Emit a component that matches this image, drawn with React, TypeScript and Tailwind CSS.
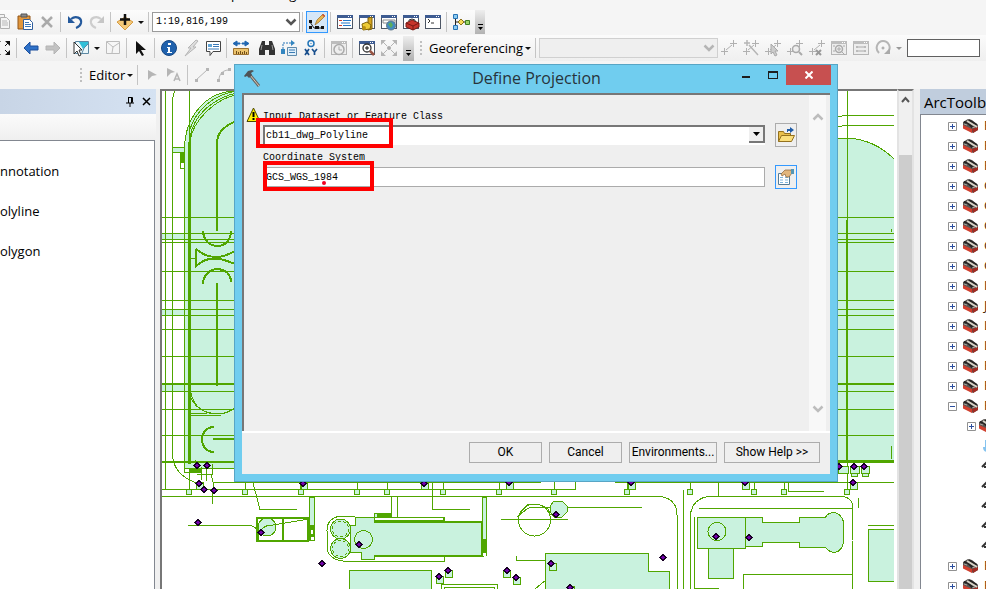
import React from 'react';

type IconProps = { children: React.ReactNode; size?: number };

const Icon: React.FC<IconProps> = ({ children, size = 18 }) => (
  <svg width={size} height={size} viewBox="0 0 18 18" fill="none" aria-hidden="true" className="shrink-0">
    {children}
  </svg>
);

type ToolProps = { label: string; active?: boolean; children: React.ReactNode };

const Tool: React.FC<ToolProps> = ({ label, active, children }) => (
  <button
    aria-label={label}
    className={
      active
        ? 'flex h-[22px] w-[22px] shrink-0 items-center justify-center border border-[#3399ff] bg-[#d5e7f8]'
        : 'flex h-[22px] w-[22px] shrink-0 items-center justify-center'
    }
  >
    <Icon>{children}</Icon>
  </button>
);

const Sep = () => <span className="mr-[3px] ml-[2px] h-5 w-px shrink-0 bg-[#c4c4c4]" />;

const Caret = ({ color = '#111' }: { color?: string }) => (
  <svg width="10" height="8" viewBox="0 0 10 8" className="shrink-0" aria-hidden="true">
    <path d="M2 3h6L5 6z" fill={color} />
  </svg>
);

const Grip = () => (
  <svg width="4" height="16" viewBox="0 0 4 16" className="shrink-0" aria-hidden="true">
    <path d="M1 1h2v2H1zM1 5h2v2H1zM1 9h2v2H1zM1 13h2v2H1z" fill="#c0c0c0" />
  </svg>
);

const Overflow = () => (
  <button
    aria-label="Toolbar options"
    className="ml-[3px] flex h-[25px] w-[11px] shrink-0 items-end justify-center bg-linear-to-b from-[#eeeeee] to-[#b0b0b0] pb-1"
  >
    <svg width="7" height="8" viewBox="0 0 7 8" aria-hidden="true">
      <path d="M1 1h5v1H1zM1 4h5L3.5 7z" fill="#000" />
    </svg>
  </button>
);

const WindowFrame = ({ dim }: { dim?: boolean }) => (
  <>
    <rect x="1.5" y="2.5" width="15" height="13" fill={dim ? '#ededed' : '#fff'} stroke={dim ? '#b5b5b5' : '#4d5664'} />
    <path d="M1 2h16v3H1z" fill={dim ? '#bdbdbd' : '#3e5c92'} />
    <path d="M12 3h1v1h-1zM14 3h1v1h-1z" fill="#fff" />
  </>
);

const LinkPoints = () => (
  <path d="M4.500 9v7M1 12.500h7M13.500 1v7M10 4.500h7M6 11l6-5" stroke="#b0b0b0" strokeWidth="1" />
);

const Chevron = ({ up, color = '#777' }: { up?: boolean; color?: string }) => (
  <svg width="12" height="10" viewBox="0 0 12 10" fill="none" className="shrink-0" aria-hidden="true">
    <path d={up ? 'M1.500 7.500L6 3l4.500 4.500' : 'M1.500 2.500L6 7l4.500-4.500'} stroke={color} strokeWidth="2.500" />
  </svg>
);

const StandardBar = () => (
  <div className="flex h-6 w-[485px] items-center overflow-hidden bg-linear-to-b from-[#fcfcfc] to-[#f0f0f0]">
    <span className="-ml-2" />
    <Tool label="Copy">
      <path d="M2.500 1.500h8v11h-8z" fill="#f4f4f4" stroke="#b0b0b0" />
      <path d="M6.500 4.500h6l3 3v8h-9z" fill="#f4f4f4" stroke="#b0b0b0" />
      <path d="M8 8h5M8 10h6M8 12h6" stroke="#b8b8b8" />
    </Tool>
    <Tool label="Paste">
      <path d="M2 3h12v13H2z" fill="#e0963c" stroke="#915417" />
      <path d="M5 1h6v3H5z" fill="#8b8b8b" stroke="#555" />
      <path d="M7.500 6.500h6l3 3v7h-9z" fill="#fff" stroke="#315f9d" />
      <path d="M9 9.500h4M9 11.500h6M9 13.500h6" stroke="#3c78bb" />
    </Tool>
    <Tool label="Delete">
      <path d="M4 4l10 10M14 4L4 14" stroke="#aaa" strokeWidth="2.500" />
    </Tool>
    <Sep />
    <Tool label="Undo">
      <path d="M5 6c5-4 11-1 10 4-.5 2-2 4-5 5" stroke="#24599c" strokeWidth="2.200" />
      <path d="M2 3v7h7z" fill="#24599c" />
    </Tool>
    <Tool label="Redo">
      <path d="M13 6C8 2 2 5 3 10c.5 2 2 4 5 5" stroke="#cdcdcd" strokeWidth="2.200" />
      <path d="M16 3v7H9z" fill="#c6c6c6" />
    </Tool>
    <Sep />
    <Tool label="Add Data">
      <path d="M1 9l8-5 8 5-8 8z" fill="#f3c878" stroke="#d69a40" />
      <path d="M9 1v11M4 6.500h10" stroke="#111" strokeWidth="2.500" />
    </Tool>
    <Caret />
    <Sep />
    <label className="relative flex h-5 w-[148px] shrink-0 items-center border border-[#9b9b9b] bg-white">
      <select
        aria-label="Map scale"
        className="h-full w-full appearance-none px-[3px] font-['Liberation_Mono',monospace] text-[10px] leading-[18px] text-black"
      >
        <option>1:19,816,199</option>
      </select>
      <span className="pointer-events-none absolute right-[2px]">
        <Chevron color="#555" />
      </span>
    </label>
    <Sep />
    <Tool label="Editor Toolbar" active>
      <path d="M2 9l4 6M6 15h8" stroke="#222" />
      <path d="M1 7h3v3H1zM1 13h3v3H1zM7 13h4v3H7zM13 13h3v3h-3z" fill="#111" />
      <path d="M7 12l2-5 6-6 2 2-6 6z" fill="#e8b64c" stroke="#9a6a25" strokeWidth=".7" />
      <path d="M14 2l1-1 2 2-1 1z" fill="#d34b3a" />
    </Tool>
    <Sep />
    <Tool label="Table Of Contents">
      <WindowFrame />
      <path d="M3 7.500h3M3 12.500h3" stroke="#d23a2a" />
      <path d="M7 7.500h8M5 10h9M7 12.500h8" stroke="#2678c8" strokeWidth="1.200" />
    </Tool>
    <Tool label="Catalog">
      <WindowFrame />
      <path d="M10 5l4-1v12l-4 1z" fill="#d7a51e" stroke="#7d5e08" />
      <path d="M4 11l5-2 4 3-1 4-7 1z" fill="#edcb37" stroke="#80650b" />
      <circle cx="6" cy="15" r="2" fill="#b98f12" />
    </Tool>
    <Tool label="Search">
      <WindowFrame />
      <path d="M3 7h12v3H3z" fill="#fff" stroke="#8a8a8a" />
      <circle cx="11" cy="12.500" r="4.500" fill="#428cc3" stroke="#617889" />
      <path d="M8 11l3-2 2 3-2 3z" fill="#5cad5c" />
    </Tool>
    <Tool label="ArcToolbox">
      <WindowFrame />
      <path d="M4 10l6-3 7 3v4l-6 3-7-3z" fill="#c7352c" stroke="#7a1a15" />
      <path d="M4 10l7 3 6-3M11 13v4" stroke="#7a1a15" />
      <path d="M7 8.500V7l3-1 3 1v1.500" stroke="#333" />
    </Tool>
    <Tool label="Python">
      <WindowFrame />
      <path d="M4 6l2 2-2 2M7 10h3" stroke="#333" />
    </Tool>
    <Sep />
    <Tool label="ModelBuilder">
      <path d="M3.500 5v9M4 9h10" stroke="#222" />
      <path d="M1.500 1.500h4v4h-4zM1.500 12.500h4v4h-4z" fill="#8ccbf1" stroke="#2874b6" />
      <path d="M9 6l3 3-3 3-3-3z" fill="#f8db58" stroke="#8d721b" />
      <path d="M13.500 7.500h4v4h-4z" fill="#9bd567" stroke="#3f7c22" />
    </Tool>
    <Overflow />
  </div>
);

const ToolsBar = () => (
  <div className="mt-px flex h-[26px] w-full items-center overflow-hidden bg-linear-to-b from-[#fbfbfb] to-[#efefef] pr-[6px]">
    <span className="-ml-2" />
    <Tool label="Full Extent">
      <path d="M11 2h5v5zM11 16h5v-5zM3 2h4L3 6zM3 16h4l-4-4z" fill="#111" />
      <path d="M11 7l4-4M11 11l4 4" stroke="#111" />
    </Tool>
    <Sep />
    <Tool label="Back">
      <path d="M2 9l6-6v4h8v4H8v4z" fill="#2f72c9" stroke="#1c4f9c" />
    </Tool>
    <Tool label="Forward">
      <path d="M16 9l-6-6v4H2v4h8v4z" fill="#c2c2c2" stroke="#b4b4b4" />
    </Tool>
    <Sep />
    <Tool label="Select Features">
      <path d="M3.500 2.500h13v12h-13z" fill="#eaf7fb" stroke="#5c88a3" />
      <path d="M7 3h9v2l-5 5z" fill="#31bfd8" />
      <path d="M10 14l2-5 4-4" stroke="#5c88a3" />
      <path d="M2 3l8 8H7l2 5-2 1-2-5-3 3z" fill="#fff" stroke="#333" />
    </Tool>
    <Caret />
    <Tool label="Clear Selection">
      <path d="M2.500 2.500h13v12h-13zM3 3l6 5 6-4M9 8l-1 6" stroke="#bcbcbc" fill="#f5f5f5" />
    </Tool>
    <Sep />
    <Tool label="Select Elements">
      <path d="M4 2l10 9H9l3 5-2 1-3-5-3 3z" fill="#111" />
    </Tool>
    <Sep />
    <Tool label="Identify">
      <circle cx="9" cy="9" r="7.500" fill="#1f61ad" stroke="#164783" />
      <path d="M8 4h3v2H8zM7 8h3v5h2v1H7v-1h1V9H7z" fill="#fff" />
    </Tool>
    <Tool label="Hyperlink">
      <path d="M14 1L6 9h3l-6 8 11-9h-3l5-6z" fill="#dedede" stroke="#b5b5b5" />
    </Tool>
    <Tool label="HTML Popup">
      <path d="M2.500 2.500h14v10H9l-3 4v-4H2.500z" fill="#fff" stroke="#444" />
      <path d="M4 5h4v3H4z" fill="#63a5d7" />
      <path d="M9 5.500h6M9 7.500h6M4 10h11" stroke="#3978b8" />
    </Tool>
    <Sep />
    <Tool label="Measure">
      <path d="M1 4.500L5 2v2h3v1H5v2zM17 4.500L13 2v2h-3v1h3v2z" fill="#2166b1" stroke="#2166b1" />
      <path d="M1.500 9.500h15v6h-15z" fill="#ecc36c" stroke="#9b7131" />
      <path d="M4.500 12v3M6.500 13v2M8.500 12v3M10.500 13v2M12.500 12v3M14.500 13v2" stroke="#704d18" />
    </Tool>
    <span className="w-1 shrink-0" />
    <Tool label="Find">
      <path d="M4 2h3v4h4V2h3l3 8v6h-6v-5H7v5H1v-6z" fill="#333" />
      <path d="M4 6l-1 5M14 6l1 5" stroke="#999" />
    </Tool>
    <Tool label="Find Route">
      <path d="M3 10V4h9" stroke="#2675b7" strokeDasharray="2 1" />
      <path d="M11 1l4 3-4 3zM1 10h4v5H1z" fill="#3386c0" />
      <path d="M7.500 8.500h9v8h-9z" fill="#e1f0fa" stroke="#5f8aab" />
      <path d="M9 11h6M9 13.500h6" stroke="#3b7bb4" />
    </Tool>
    <Tool label="Go To XY">
      <circle cx="9" cy="4.500" r="3" stroke="#2476b8" strokeWidth="1.500" />
      <path d="M8.500 4h1v1h-1z" fill="#2476b8" />
      <path d="M3 10l4 6M7 10l-4 6M10 10l2.500 3L15 10M12.500 13v3" stroke="#194f8d" strokeWidth="1.700" />
    </Tool>
    <Sep />
    <Tool label="Time Slider">
      <WindowFrame dim />
      <circle cx="9" cy="10.500" r="5" fill="#eee" stroke="#aaa" strokeWidth="1.500" />
      <path d="M9 7.500V11h3" stroke="#aaa" />
    </Tool>
    <Sep />
    <Tool label="Viewer Window">
      <WindowFrame />
      <circle cx="9" cy="9" r="4" fill="#fff" stroke="#333" strokeWidth="1.300" />
      <path d="M7 9h4M9 7v4" stroke="#111" />
      <path d="M12 12l4 4" stroke="#9a5544" strokeWidth="2.500" />
    </Tool>
    <Tool label="Expand">
      <path d="M1 1h5L1 6zM17 1h-5l5 5zM1 17h5l-5-5zM17 17h-5l5-5z" fill="#b5b5b5" />
      <path d="M3 3l4 4M15 3l-4 4M3 15l4-4M15 15l-4-4" stroke="#b5b5b5" />
      <circle cx="9" cy="9" r="2" fill="#aaa" />
    </Tool>
    <Overflow />
    <span className="ml-[5px] flex shrink-0">
      <Grip />
    </span>
    <button className="ml-[6px] flex shrink-0 items-center text-[13px] leading-5 text-black">
      Georeferencing
      <Caret />
    </button>
    <Sep />
    <label className="relative flex h-5 w-[179px] shrink-0 items-center border border-[#d0d0d0] bg-[#efefef]">
      <select aria-label="Georeferencing layer" disabled className="h-full w-full appearance-none" />
      <span className="pointer-events-none absolute right-[2px]">
        <Chevron color="#b5b5b5" />
      </span>
    </label>
    <Tool label="Add Control Points">
      <LinkPoints />
    </Tool>
    <Tool label="Auto Registration">
      <LinkPoints />
      <path d="M7 6l9 10M2 4h6M5 1v6" stroke="#b5b5b5" strokeWidth="1.500" />
    </Tool>
    <Tool label="Select Link">
      <LinkPoints />
      <path d="M7 5l7 7h-3l2 4-2 1-2-4-2 2z" fill="#ccc" stroke="#aaa" />
    </Tool>
    <Tool label="Zoom To Link">
      <LinkPoints />
      <circle cx="10" cy="10" r="3.500" fill="#eee" stroke="#aaa" strokeWidth="1.500" />
      <path d="M13 13l3 3" stroke="#aaa" strokeWidth="2" />
    </Tool>
    <Tool label="Delete Link">
      <LinkPoints />
      <path d="M8 11l5 5M13 11l-5 5" stroke="#999" strokeWidth="2" />
    </Tool>
    <Tool label="Viewer">
      <WindowFrame dim />
      <circle cx="9" cy="10" r="3.500" fill="#eee" stroke="#aaa" strokeWidth="1.500" />
      <path d="M3 7h2M13 7h2M3 12h2M12 13l3 3M7 10h4M9 8v4" stroke="#aaa" />
    </Tool>
    <Tool label="Link Table">
      <WindowFrame dim />
      <path d="M4 8h10M4 12h10M5 7v2M13 7v2M5 11v2M13 11v2" stroke="#aaa" />
    </Tool>
    <Tool label="Rotate">
      <path d="M5 14C0 9 4 2 9 2s9 6 5 11" stroke="#b5b5b5" strokeWidth="2" />
      <path d="M10 15h6V9z" fill="#aaa" />
      <path d="M7.500 9h3M9 7.500v3" stroke="#999" />
    </Tool>
    <Caret color="#999" />
    <input
      aria-label="Rotation"
      className="ml-[3px] h-[18px] w-0 min-w-0 flex-1 border border-[#606060] bg-white px-1 text-xs"
    />
  </div>
);

const EditorBar = () => (
  <div className="mt-px flex h-[27px] items-center overflow-hidden bg-[#f5f5f5] pb-[2px] pl-[79px]">
    <Grip />
    <button className="ml-[6px] flex shrink-0 items-center text-[13px] leading-5 text-black">
      Editor
      <Caret />
    </button>
    <Sep />
    <Tool label="Edit Tool">
      <path d="M5 4l9 5-5 1-4 4z" fill="#b5b5b5" />
    </Tool>
    <Tool label="Edit Annotation Tool">
      <path d="M2 2l8 4-4 1-4 4z" fill="#b5b5b5" />
      <path d="M9 15l3-7 3 7M10 13h4" stroke="#b5b5b5" strokeWidth="1.500" />
    </Tool>
    <Sep />
    <Tool label="Straight Segment">
      <path d="M3 14L14 4" stroke="#b5b5b5" />
      <path d="M2 13h3v3H2zM13 2h3v3h-3z" fill="#b5b5b5" />
    </Tool>
    <Tool label="Arc Segment">
      <path d="M4 14c0-6 4-10 10-10" stroke="#b5b5b5" />
      <path d="M2 13h3v3H2zM6 6h3v3H6zM13 2h3v3h-3z" fill="#b5b5b5" />
    </Tool>
  </div>
);

const gridLines = [217, 233, 239, 242, 271, 300, 309, 315, 329, 356, 391, 409, 435];
const valves = [189, 245, 301, 357, 387, 443, 499, 554, 627, 690, 754, 784, 847];
const hatches = [
  [300, 482], [421, 482], [506, 482], [628, 482], [742, 482], [850, 482],
  [436, 576], [445, 570], [503, 570], [513, 577], [549, 563], [567, 586],
  [196, 482],
];
const points = [
  [197, 465], [207, 465], [199, 483], [204, 489], [214, 490], [198, 522],
  [261, 532], [359, 544], [322, 563], [303, 483], [424, 483], [439, 576],
  [448, 570], [509, 482], [631, 482], [556, 514], [663, 557], [551, 563],
  [507, 570], [516, 577], [570, 587], [716, 536], [749, 537], [745, 482],
  [839, 466], [854, 466], [864, 466], [853, 482],
];

const MapDrawing = () => (
  <svg
    viewBox="162 91 732 498"
    preserveAspectRatio="xMinYMin slice"
    className="h-full w-full"
    shapeRendering="crispEdges"
    role="img"
    aria-label="Map"
  >
    <g fill="#c9f2de">
      <path d="M185 468V148C185 118 205 92 234 91h6v377z" />
      <path d="M162 234h23v6h-23zM162 310h23v6h-23zM162 384h23v8h-23zM173 147h12v5h-12z" />
      <path d="M830 138h17c19 1 35 9 47 21v302h-64z" />
    </g>

    <g fill="none" stroke="#50a600" strokeWidth="1">
      {gridLines.map((y) => (
        <path key={y} d={`M162 ${y}.5H240M830 ${y}.5H894`} />
      ))}
      <path d="M165.500 91V489M172.500 456V99l2-8M189.500 91V142M184.500 472V148C185 118 205 92 234 91" />
      <path d="M190 137C194 115 212 98 240 92M190 129C196 111 212 95 236 91M190 142C192 122 214 98 240 94" />
      <path d="M172.500 456C174 472 186 480 200 484" />
      <path d="M173 147.500h11M173 152.500h11M180.500 163v5h4" />
      <path d="M191 258.500h5M191 393c3 15 14 21 26 21 9 0 16-3 23-10M191 398c5 11 14 15 26 16 8 0 12-2 20-8M191 413.500h16M191 415.500h30" />
      <path d="M184 468.500h50M184 472.500h18M189.500 472V490M195.500 460v12M201 467v13M206 467v14M197 474h15v-10M211 474l3 12-2 10 1 8" />
      <path d="M213 482.500H541M615 482.500H894M162 489.500H575.500V482" />
      <path d="M162 496.500H660c11 1 17 8 17 18V589M683.500 490V589M690.500 589V515c1-12 9-18 20-18.500H843c7 1 10 6 10 12l-1 32V589" />
      <path d="M699 508.500H853M694.500 517V588.500H719M743.500 589V574.500H852M858.500 498v10" />
      <path d="M253 483l7 26.500h37M188 525.500h63l7 4M432.500 483v26.500h37M391.500 497v20M397.500 497v20" />
      <path d="M788.500 482v9.500h35M718.500 482v14M868 525.500h26M516.500 556v4.500h32M535 589l11-9" />
      <path d="M441.500 589v-4.500h56v4.500M444.500 589v-2h50v2" />
      <path d="M847.500 91V220M847.500 463V490M830 117h7l8-1.500h49M830 127h7l8-1.500h49M830 138h17c19 1 35 9 47 21M891.500 446v13M891.500 229v3" />
      <path d="M517 517l11-12.500h9c6 0 13 4 13 10M518 516c5-3 7-7 12-8.500H642M501 519.500h67" />
      <circle cx="534.500" cy="520" r="16" />
    </g>

    {/* heavier strokes: tracks and runways */}
    <g fill="none" stroke="#50a600" strokeWidth="2">
      <path d="M189.500 142V464" strokeWidth="3" />
      <path d="M217 231V143c0-11 9-19 23-23M217 283V386M162 384H240M830 384H894M162 462H240" />
      <path d="M830 461.500H894" strokeWidth="3" />
      <path d="M847 220V463" />
      <path d="M203 231c1 20 28 20 28 0M203 284c1-20 28-19 28-2" />
      <path d="M196 249v17l7-5c9-4 18-3 32 3M196 249l7 5c9 4 18 5 32-3" />
      <path d="M214 427c-16 0-16 25 0 25M213 438.500h25" />
    </g>
    <path d="M180 152h5v11h-5zM189 468h13v5h-13z" fill="#50a600" />

    {/* buildings */}
    <g fill="#c9f2de" stroke="#50a600">
      <path d="M309.500 497h5v28h-5z" />
      <circle cx="267" cy="527" r="9" />
      <path d="M258 541c0-10 5-16 15-16l36-6" fill="none" />
      <path d="M257 518h51v23h-51zM283 518v23" fill="none" strokeWidth="2" />
      <path d="M355 516.500H338c-8 2-11 8-11 14v17c0 8 8 13 16 13.500h101v-4" fill="#fff" />
      <path d="M374.500 517v-4h17v4h52.500v4h39v35H374v3.500H361.500v-7H350v-27.500h5v-8z" />
      <path d="M374 522h108v34H374" fill="none" strokeWidth="2" />
      <path d="M374.500 517.500h69v3h-69z" fill="#fff" />
      <circle cx="340.500" cy="529" r="10" />
      <circle cx="340.500" cy="548.500" r="10" />
      <circle cx="340.500" cy="529" r="8" fill="none" strokeDasharray="3 2" />
      <circle cx="340.500" cy="548.500" r="8" fill="none" strokeDasharray="3 2" />
      <circle cx="363.500" cy="539.500" r="9" />
      <path d="M482.500 497h4v43h-4zM349.500 570.500h82v20h-82z" />
      <path d="M545.500 590V553.500h103v18h21v19z" />
      <path d="M697.500 517.500h48v31h-48zM708.500 548.500h25v30h-25z" />
      <path d="M745.500 517.500h17v5h37v-5H825c6-8 15-6 18.500 4V543c-3 11-12 12-18.500 4H799.500v-5h-37v4.500h-17z" />
      <circle cx="717" cy="531.500" r="9" />
      <path d="M868.500 529.500h26v52h-26z" />
      <path d="M554 501h8l5 5v6l-5 5h-8l-4-5v-6z" />
      <path d="M838 466h10v7h-10zM850.500 466h9v7h-9zM861.500 466h8v7h-8zM851.500 473h6v3h-6zM862.500 473h6v3h-6z" />
      {hatches.map(([x, y]) => (
        <rect key={`${x}-${y}`} x={x + 0.5} y={y + 0.5} width="7" height="7" />
      ))}
      {valves.map((x) => (
        <g key={x}>
          <path d={`M${x}.5 482v8`} />
          <circle cx={x} cy="492" r="3" />
        </g>
      ))}
    </g>
    <path d="M309 525h6v16h-6zM377 514h14v4h-14zM482 539h5v17h-5z" fill="#50a600" />
    <path d="M311 530h2v4h-2zM311 537h3v3h-3zM483 553h3v3h-3z" fill="#fff" />

    <g fill="#7400ad" stroke="#170024">
      {points.map(([x, y]) => (
        <path key={`${x}-${y}`} d={`M${x} ${y - 2.5}l3 3-3 3-3-3z`} />
      ))}
    </g>
  </svg>
);

const LayersPanel = () => (
  <aside className="flex w-[156px] shrink-0 flex-col overflow-hidden">
    <div className="flex h-[25px] items-center justify-end gap-2 bg-linear-to-r from-[#c8d5e6] to-[#d5e2f2] pr-[5px]">
      <button aria-label="Auto hide">
        <svg width="8" height="10" viewBox="0 0 8 10" fill="none" aria-hidden="true">
          <path d="M2 .5h4.500v5M2.500 0v6M5.500 1v5M0 6h8M4 6v4" stroke="#000" />
        </svg>
      </button>
      <button aria-label="Close panel">
        <svg width="9" height="9" viewBox="0 0 9 9" aria-hidden="true">
          <path d="M1 1l7 7M8 1L1 8" stroke="#000" strokeWidth="1.500" />
        </svg>
      </button>
    </div>
    <div className="h-[26px] bg-linear-to-b from-[#fbfbfb] to-[#efefef]" />
    <ul className="mr-px flex-1 border-t border-r border-[#828790] bg-white pt-5 text-[13px] leading-5 text-black">
      <li className="mb-5">nnotation</li>
      <li className="mb-5">olyline</li>
      <li>olygon</li>
    </ul>
  </aside>
);

const toolsets = [
  'Features', 'Fields', 'File Geodatabase', 'General', 'Generalization', 'Geodatabase Administration',
  'Geometric Network', 'Graph', 'Indexes', 'Joins', 'LAS Dataset', 'Layers and Table Views', 'Package', 'Photos',
];

const Expander = ({ open }: { open?: boolean }) => (
  <svg width="9" height="9" viewBox="0 0 9 9" className="shrink-0" aria-hidden="true">
    <path d="M.5.5h8v8h-8z" fill="#fff" stroke="#919191" />
    <path d={open ? 'M2 4.500h5' : 'M2 4.500h5M4.500 2v5'} stroke="#2c4f9e" />
  </svg>
);

const ToolsetIcon = () => (
  <svg width="17" height="16" viewBox="0 0 17 16" className="shrink-0" aria-hidden="true">
    <path d="M1 4l5-3 4 1 6 5v5l-5 3L1 9z" fill="#5a5653" />
    <path d="M1 7l9 4v4L1 10.500z" fill="#d0402f" />
    <path d="M10 11l6-2v3l-5 3z" fill="#a12c22" />
    <path d="M2 4l4 1 5 5M7 2l8 5" stroke="#262423" strokeWidth="2" fill="none" />
    <path d="M5 3l10 6" stroke="#d9d4c8" strokeWidth="2" fill="none" />
    <path d="M2 6l3 1M10 10l3-1" stroke="#a8a39c" strokeWidth="1" fill="none" />
  </svg>
);

const Toolset = ({ name, open }: { name: string; open?: boolean }) => (
  <li className="flex h-5 items-center gap-[5px] pl-[27px] whitespace-nowrap">
    <Expander open={open} />
    <ToolsetIcon />
    <span>{name}</span>
  </li>
);

const ToolboxPanel = () => (
  <aside className="ml-[6px] w-[66px] shrink-0 overflow-hidden">
    <h2 className="h-[25px] bg-[#c0cddd] pl-1 text-[15px] leading-[26px] text-black">ArcToolbox</h2>
    <ul className="h-full border-t border-l border-[#828790] bg-white pt-px text-[13px] text-[#4a2800]">
      {toolsets.map((name) => (
        <Toolset key={name} name={name} />
      ))}
      <Toolset name="Projections and Transformations" open />
      <li className="flex h-5 items-center gap-[2px] pl-[46px]">
        <Expander />
        <ToolsetIcon />
      </li>
      <li className="flex h-5 items-center pl-[61px]">
        <svg width="8" height="14" viewBox="0 0 8 14" className="shrink-0" aria-hidden="true">
          <path d="M3 1v7H1c0 5 3 5 7 5V1z" fill="#86c4ef" />
        </svg>
      </li>
      {[1, 2, 3, 4, 5].map((n) => (
        <li key={n} className="flex h-5 items-center pl-[60px]">
          <svg width="10" height="10" viewBox="0 0 10 10" className="shrink-0" aria-hidden="true">
            <path d="M1 6l4-4 4 4M3 6h3" stroke="#333" strokeWidth="2" fill="none" />
          </svg>
        </li>
      ))}
      <Toolset name="Raster" />
      <Toolset name="Relationship Classes" />
    </ul>
  </aside>
);

const dialogButton =
  "h-[21px] border border-[#acacac] bg-[#efefef] text-center font-['Roboto',sans-serif] text-xs leading-[19px] text-black";

const DefineProjection = () => (
  <section
    role="dialog"
    aria-labelledby="dialog-title"
    className="absolute top-16 left-[234px] flex h-[418px] w-[604px] flex-col border border-[#58a5c5] bg-[#70cdef] px-[7px] pb-[7px]"
  >
    <header className="relative flex h-[28px] shrink-0 items-start pr-5">
      <svg width="20" height="20" viewBox="0 0 20 20" className="mt-1 ml-[1px]" fill="none" aria-hidden="true">
        <path d="M7 6l9 11" stroke="#666" strokeWidth="3" />
        <path d="M7 6l9 11" stroke="#d9c8b2" strokeWidth="1" />
        <path d="M1 7l4-5 4-1 2 1-3 2 1 2-3 3-2-2-2 1z" fill="#4e5356" />
      </svg>
      <h1 id="dialog-title" className="flex-1 text-center text-base leading-[27px] text-[#28343b]">
        Define Projection
      </h1>
      <div className="absolute top-0 -right-[1px] flex items-start">
        <button aria-label="Minimize" className="flex h-5 w-[27px] items-center justify-center">
          <svg width="8" height="10" viewBox="0 0 8 10" aria-hidden="true">
            <path d="M0 6h8v2H0z" fill="#1d1d1d" />
          </svg>
        </button>
        <button aria-label="Maximize" className="flex h-5 w-[27px] items-center justify-center">
          <svg width="10" height="8" viewBox="0 0 10 8" aria-hidden="true">
            <path d="M0 0h10v8H0zM1 2v5h8V2z" fill="#1d1d1d" fillRule="evenodd" />
          </svg>
        </button>
        <button aria-label="Close" className="flex h-5 w-[45px] items-center justify-center bg-[#c75050]">
          <svg width="8" height="8" viewBox="0 0 8 8" aria-hidden="true">
            <path d="M.5.5l7 7M7.500.5l-7 7" stroke="#fff" strokeWidth="2" />
          </svg>
        </button>
      </div>
    </header>

    <div className="flex min-h-0 flex-1 flex-col bg-[#efefef]">
      <div className="flex flex-1 border-t-2 border-l-2 border-[#777] pr-1">
        <form className="flex-1 pt-[14px] pl-[19px] font-['Liberation_Mono',monospace] text-[10px] text-black">
          <div className="relative flex items-end">
            <svg width="15" height="16" viewBox="0 0 15 16" className="absolute -top-[2px] -left-[17px]" aria-hidden="true">
              <path d="M7.500 1L14 14.500H1z" fill="#ffef00" stroke="#4c4800" strokeLinejoin="round" />
              <path d="M6.500 5h2v5h-2zM6.500 11h2v2h-2z" fill="#000" />
            </svg>
            <label htmlFor="dataset" className="h-[14px] leading-4">
              Input Dataset or Feature Class
            </label>
          </div>
          <div className="flex items-center gap-[10px]">
            <div className="relative h-5 w-[502px] border-t-2 border-l-2 border-[#777] bg-white">
              <select id="dataset" className="block h-[18px] w-full appearance-none pl-[1px] leading-[18px]">
                <option>cb11_dwg_Polyline</option>
              </select>
              <span className="pointer-events-none absolute top-0 right-0 flex h-4 w-4 items-center justify-center border-r-2 border-b-2 border-[#777] bg-[#efefef]">
                <svg width="7" height="4" viewBox="0 0 7 4" aria-hidden="true">
                  <path d="M0 0h7L3.500 4z" fill="#000" />
                </svg>
              </span>
              <span className="pointer-events-none absolute -top-[9px] -left-[9px] h-[30px] w-[137px] border-4 border-[#ff0000]" />
            </div>
            <button type="button" aria-label="Browse dataset" className="flex h-6 w-[22px] items-center justify-center border border-[#acacac]">
              <Icon>
                <path d="M1.500 15.500v-10h5l1 2h6v2" fill="#e9bf4c" stroke="#94711e" />
                <path d="M4.500 9.500h13l-3 6h-13z" fill="#fbdf7c" stroke="#94711e" />
                <path d="M10 6V3h3V1l4 3-4 3V5h-2v1z" fill="#205ca6" />
              </Icon>
            </button>
          </div>
          <label htmlFor="coordinate" className="mt-[3px] block h-[15px] leading-4">
            Coordinate System
          </label>
          <div className="flex items-center gap-[10px]">
            <div className="relative h-5 w-[502px]">
              <input
                id="coordinate"
                defaultValue="GCS_WGS_1984"
                className="block h-full w-full border border-[#ababab] bg-white pl-[2px] leading-[18px]"
              />
              <span className="pointer-events-none absolute -top-[6px] left-0 h-[30px] w-[111px] border-4 border-[#ff0000]" />
              <span className="pointer-events-none absolute top-[14px] left-[59px] h-1 w-1 rounded-full bg-[#f00020]" />
            </div>
            <button type="button" aria-label="Coordinate system properties" className="flex h-6 w-[22px] items-center justify-center border border-[#3399ff]">
              <Icon>
                <path d="M1.500 5.500h11v11h-11z" fill="#fff" stroke="#567b94" />
                <path d="M3 9.500h3M8 9.500h3M3 12h3M8 12h3M3 14.500h3M8 14.500h3" stroke="#7fb5dc" />
                <path d="M4 6l4-4h6l1 3-3 4H9L8 6 5 8z" fill="#e2b67d" stroke="#88633b" strokeWidth=".7" />
                <path d="M14 1h3v5h-3z" fill="#5597b5" />
              </Icon>
            </button>
          </div>
        </form>
        <div className="flex w-[17px] flex-col items-center justify-between bg-[#f8f8f8] py-[17px]">
          <Chevron up color="#bdbdbd" />
          <Chevron color="#bdbdbd" />
        </div>
      </div>
      <footer className="flex h-[43px] shrink-0 items-center justify-end gap-[7px] border-t-2 border-white pr-[10px] pb-[3px]">
        <button className={`${dialogButton} w-[73px]`}>OK</button>
        <button className={`${dialogButton} w-[73px]`}>Cancel</button>
        <button className={`${dialogButton} w-[88px]`}>Environments...</button>
        <button className={`${dialogButton} w-[96px]`}>Show Help &gt;&gt;</button>
      </footer>
    </div>
  </section>
);

const App: React.FC = () => {
  return (
    <div className="relative flex h-screen flex-col overflow-hidden bg-[#f5f5f5] font-['Open_Sans','Noto_Sans',sans-serif]">
      <nav className="-mt-4 flex h-[26px] shrink-0 gap-4 text-[13px] leading-5 text-black">
        <a href="#bookmarks">Bookmarks</a>
        <a href="#insert">Insert</a>
        <a href="#selection">Selection</a>
        <a href="#geoprocessing">Geoprocessing</a>
      </nav>
      <div className="shrink-0">
        <StandardBar />
        <ToolsBar />
        <EditorBar />
      </div>
      <main className="flex min-h-0 flex-1 bg-[#f0f0f0]">
        <LayersPanel />
        <div className="ml-1 min-w-0 flex-1 border-t-2 border-l-2 border-[#777] bg-white pr-[3px]">
          <MapDrawing />
        </div>
        <div className="flex w-[17px] shrink-0 flex-col items-center border-t-2 border-r-2 border-l-2 border-t-[#777] border-r-[#e3e3e3] border-l-[#e3e3e3] bg-[#f0f0f0]">
          <div className="flex h-16 items-start pt-1">
            <svg width="9" height="9" viewBox="0 0 9 9" fill="none" aria-hidden="true">
              <path d="M1 7l3.500-4L8 7" stroke="#555" strokeWidth="2" />
            </svg>
          </div>
          <div className="w-full flex-1 bg-[#cdcdcd]" />
        </div>
        <ToolboxPanel />
      </main>
      <DefineProjection />
    </div>
  );
};

export default App;
